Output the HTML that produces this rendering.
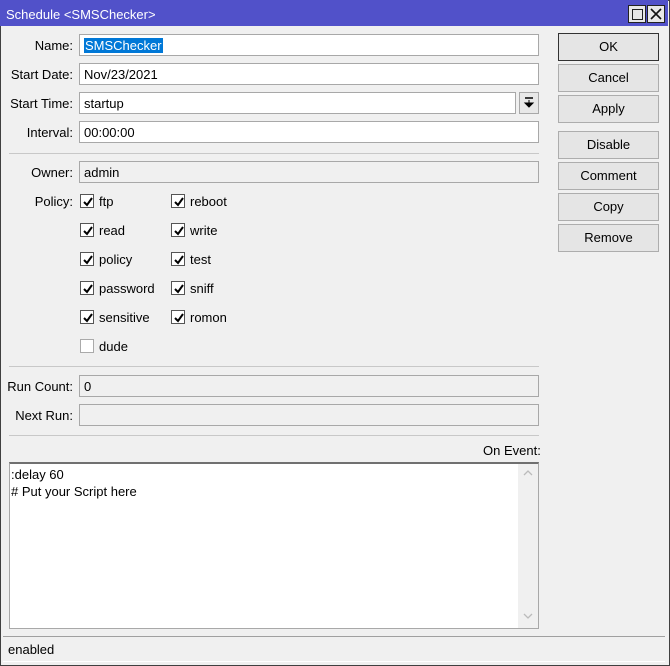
<!DOCTYPE html>
<html><head><style>
*{margin:0;padding:0;box-sizing:border-box}
body{width:670px;height:666px;background:#f0f0f0;font-family:"Liberation Sans",Arial,sans-serif;font-size:13px;color:#000;position:relative;overflow:hidden}
.win{position:absolute;left:0;top:0;width:670px;height:666px;border:1px solid #404040}
.title{position:absolute;left:0;top:0;width:668px;height:26px;background:#5151c9;color:#fff;font-size:13px;padding:7px 0 0 6px}
.tb{position:absolute;top:5px;width:18px;height:18px;border:1px solid #222;background:#e8e8e8}
.a{position:absolute}
.lbl{position:absolute;text-align:right;width:73px;left:0}
.in{position:absolute;left:79px;height:22px;border:1px solid #a8a8a8;background:#fff;padding:3px 4px}
.ro{background:#f0f0f0}
.btn{position:absolute;left:558px;width:101px;height:28px;border:1px solid #adadad;background:#e5e5e5;text-align:center;line-height:26px}
.sep{position:absolute;left:9px;width:530px;height:1px;background:#c8c8c8}
.cb{position:absolute;width:14px;height:14px;border:1px solid #555;background:#fff}
.cb svg{position:absolute;left:1px;top:1px}
</style></head><body>
<div class="win"></div>
<div class="title">Schedule &lt;SMSChecker&gt;</div>
<div class="tb" style="left:628px"><div style="position:absolute;left:3px;top:3px;width:11px;height:11px;border:1px solid #222"></div></div>
<div class="tb" style="left:647px"><svg width="16" height="16" style="position:absolute;left:0;top:0"><path d="M3 3L13 13M13 3L3 13" stroke="#111" stroke-width="1.6"/></svg></div>

<div class="lbl" style="top:38px">Name:</div>
<div class="in" style="top:34px;width:460px"><span style="background:#0078d7;color:#fff;padding:0 1px">SMSChecker</span></div>
<div class="lbl" style="top:67px">Start Date:</div>
<div class="in" style="top:63px;width:460px">Nov/23/2021</div>
<div class="lbl" style="top:96px">Start Time:</div>
<div class="in" style="top:92px;width:437px">startup</div>
<div class="a" style="left:519px;top:92px;width:20px;height:22px;border:1px solid #a8a8a8;background:#e8e8e8"><svg width="18" height="20"><path d="M5 5h8" stroke="#000" stroke-width="1.5"/><path d="M9 7v3M5 10h8l-4 4z" stroke="#000" fill="#000"/></svg></div>
<div class="lbl" style="top:125px">Interval:</div>
<div class="in" style="top:121px;width:460px">00:00:00</div>
<div class="sep" style="top:153px"></div>
<div class="lbl" style="top:165px">Owner:</div>
<div class="in ro" style="top:161px;width:460px">admin</div>
<div class="lbl" style="top:194px">Policy:</div>

<div class="cb" style="left:80px;top:194px"><svg width="12" height="12"><path d="M2 6l3 3 5-7" stroke="#000" stroke-width="2" fill="none"/></svg></div><div class="a" style="left:99px;top:194px">ftp</div>
<div class="cb" style="left:171px;top:194px"><svg width="12" height="12"><path d="M2 6l3 3 5-7" stroke="#000" stroke-width="2" fill="none"/></svg></div><div class="a" style="left:190px;top:194px">reboot</div>
<div class="cb" style="left:80px;top:223px"><svg width="12" height="12"><path d="M2 6l3 3 5-7" stroke="#000" stroke-width="2" fill="none"/></svg></div><div class="a" style="left:99px;top:223px">read</div>
<div class="cb" style="left:171px;top:223px"><svg width="12" height="12"><path d="M2 6l3 3 5-7" stroke="#000" stroke-width="2" fill="none"/></svg></div><div class="a" style="left:190px;top:223px">write</div>
<div class="cb" style="left:80px;top:252px"><svg width="12" height="12"><path d="M2 6l3 3 5-7" stroke="#000" stroke-width="2" fill="none"/></svg></div><div class="a" style="left:99px;top:252px">policy</div>
<div class="cb" style="left:171px;top:252px"><svg width="12" height="12"><path d="M2 6l3 3 5-7" stroke="#000" stroke-width="2" fill="none"/></svg></div><div class="a" style="left:190px;top:252px">test</div>
<div class="cb" style="left:80px;top:281px"><svg width="12" height="12"><path d="M2 6l3 3 5-7" stroke="#000" stroke-width="2" fill="none"/></svg></div><div class="a" style="left:99px;top:281px">password</div>
<div class="cb" style="left:171px;top:281px"><svg width="12" height="12"><path d="M2 6l3 3 5-7" stroke="#000" stroke-width="2" fill="none"/></svg></div><div class="a" style="left:190px;top:281px">sniff</div>
<div class="cb" style="left:80px;top:310px"><svg width="12" height="12"><path d="M2 6l3 3 5-7" stroke="#000" stroke-width="2" fill="none"/></svg></div><div class="a" style="left:99px;top:310px">sensitive</div>
<div class="cb" style="left:171px;top:310px"><svg width="12" height="12"><path d="M2 6l3 3 5-7" stroke="#000" stroke-width="2" fill="none"/></svg></div><div class="a" style="left:190px;top:310px">romon</div>
<div class="cb" style="left:80px;top:339px;border-color:#aaa"></div><div class="a" style="left:99px;top:339px">dude</div>

<div class="sep" style="top:366px"></div>
<div class="lbl" style="top:379px">Run Count:</div>
<div class="in ro" style="top:375px;width:460px">0</div>
<div class="lbl" style="top:408px">Next Run:</div>
<div class="in ro" style="top:404px;width:460px"></div>
<div class="sep" style="top:435px"></div>
<div class="a" style="left:483px;top:443px">On Event:</div>
<div class="a" style="left:9px;top:462px;width:530px;height:167px;border:1px solid #a8a8a8;border-top:2px solid #707070;background:#fff;padding:2px 1px;line-height:17px">:delay 60<br># Put your Script here</div>
<div class="a" style="left:518px;top:464px;width:20px;height:164px;background:#f0f0f0"><svg width="20" height="164"><path d="M6 11l4-4 4 4M6 150l4 4 4-4" stroke="#bbb" fill="none" stroke-width="1.3"/></svg></div>

<div class="btn" style="top:33px;border:1px solid #333">OK</div>
<div class="btn" style="top:64px">Cancel</div>
<div class="btn" style="top:95px">Apply</div>
<div class="btn" style="top:131px">Disable</div>
<div class="btn" style="top:162px">Comment</div>
<div class="btn" style="top:193px">Copy</div>
<div class="btn" style="top:224px">Remove</div>

<div class="a" style="left:3px;top:636px;width:662px;height:26px;border-top:1px solid #a0a0a0;border-bottom:1px solid #fff"></div>
<div class="a" style="left:8px;top:642px">enabled</div>
</body></html>
